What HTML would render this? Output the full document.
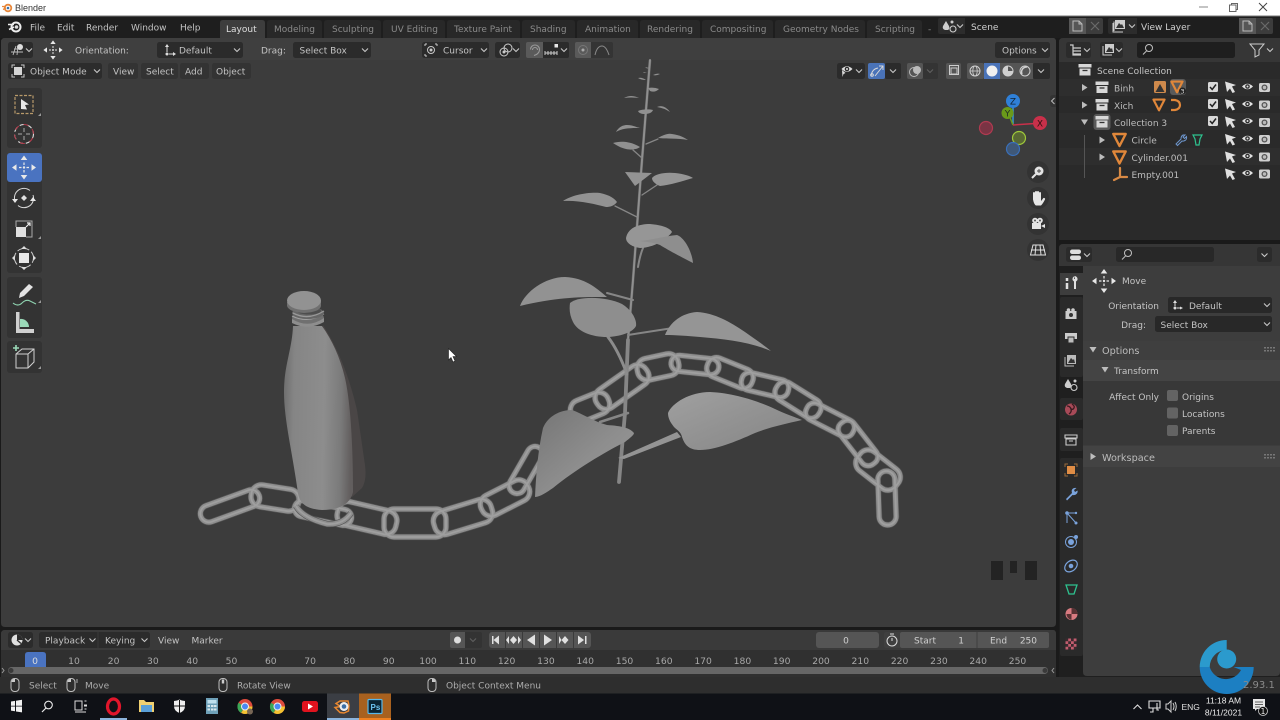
<!DOCTYPE html>
<html><head><meta charset="utf-8"><title>Blender</title>
<style>
html,body{margin:0;padding:0;background:#3c3c3c;width:1280px;height:720px;overflow:hidden}
svg{display:block}
text{font-family:"DejaVu Sans","Liberation Sans",sans-serif;font-size:9px;fill:#c4c4c4}
.d{fill:#8a8a8a}
.m{fill:#adadad}
.s{font-size:9.2px;fill:#a8a8a8}
.r{text-anchor:end}
.c{text-anchor:middle}
.lf{fill:#909090}
.st{fill:none;stroke:#868686;stroke-linecap:round}
</style></head><body>
<svg width="1280" height="720" viewBox="0 0 1280 720" xmlns="http://www.w3.org/2000/svg">
<defs>
<linearGradient id="bot" x1="0" x2="1" y1="0" y2="0.05"><stop offset="0" stop-color="#6c6c6c"/><stop offset=".16" stop-color="#858585"/><stop offset=".6" stop-color="#8d8d8d"/><stop offset=".85" stop-color="#7a7a7a"/><stop offset="1" stop-color="#625e5e"/></linearGradient>
<linearGradient id="lfA" x1="0" x2="1" y1="0" y2="1"><stop offset="0" stop-color="#757575"/><stop offset=".55" stop-color="#8e8e8e"/><stop offset="1" stop-color="#9a9a9a"/></linearGradient>
<linearGradient id="lfB" x1="0" x2="1" y1="0" y2="1"><stop offset="0" stop-color="#a0a0a0"/><stop offset=".5" stop-color="#929292"/><stop offset="1" stop-color="#858585"/></linearGradient>
<g id="chain" fill="none">
<rect x="-31" y="-8.5" width="62" height="17" rx="8.5" transform="translate(230,506) rotate(-20)"/>
<rect x="-24" y="-11" width="48" height="22" rx="10" transform="translate(275,498) rotate(9)"/>
<rect x="-29" y="-8" width="58" height="16" rx="8" transform="translate(323,513) rotate(12)"/>
<rect x="-30" y="-12" width="60" height="24" rx="10" transform="translate(367,518) rotate(13)"/>
<rect x="-31" y="-14" width="62" height="28" rx="10" transform="translate(415,523)"/>
<rect x="-30" y="-12" width="60" height="24" rx="10" transform="translate(463,517) rotate(-17)"/>
<rect x="-26" y="-11" width="52" height="22" rx="10" transform="translate(505,498) rotate(-27)"/>
<rect x="-26" y="-8" width="52" height="16" rx="8" transform="translate(526,470) rotate(-60)"/>
<rect x="-20" y="-11" width="40" height="22" rx="10" transform="translate(590,407) rotate(-22)"/>
<rect x="-30" y="-11" width="60" height="22" rx="10" transform="translate(622,387) rotate(-35)"/>
<rect x="-21" y="-11" width="42" height="22" rx="10" transform="translate(658,367) rotate(-12)"/>
<rect x="-24" y="-8" width="48" height="16" rx="8" transform="translate(695,365) rotate(6)"/>
<rect x="-24" y="-10" width="48" height="20" rx="9" transform="translate(730,373) rotate(22)"/>
<rect x="-24" y="-9" width="48" height="18" rx="8" transform="translate(765,385) rotate(13)"/>
<rect x="-25" y="-10" width="50" height="20" rx="9" transform="translate(798,400) rotate(32)"/>
<rect x="-26" y="-9" width="52" height="18" rx="8" transform="translate(830,420) rotate(27)"/>
<rect x="-26" y="-9" width="52" height="18" rx="8" transform="translate(858,443) rotate(52)"/>
<rect x="-24" y="-12" width="48" height="24" rx="10" transform="translate(878,470) rotate(38)"/>
<rect x="-27" y="-8.5" width="54" height="17" rx="8.5" transform="translate(887,498) rotate(88)"/>
</g>
<g id="mv" fill="none" stroke="#e8e8e8">
<path d="M0-5V-2.5M0 2.5V5M-5 0H-2.5M2.5 0H5" stroke-width="1.2"/>
<path d="M0-12l-3.3 4.5h6.6zM0 12l-3.3-4.5h6.6zM-12 0l4.5-3.3v6.6zM12 0l-4.500-3.300v6.600z" fill="#e8e8e8" stroke="none"/>
<circle r="1.200" fill="#e8e8e8" stroke="none"/>
</g>
<path id="chev" d="M-3-1.500L0 1.500 3-1.500" fill="none" stroke="#c8c8c8" stroke-width="1.100"/>
<g id="eye"><path d="M-5.500 0Q0-5.500 5.500 0Q0 5.500-5.500 0Z" fill="#e0e0e0"/><circle r="2.300" fill="#2b2b2b"/><circle r="1" fill="#e0e0e0"/></g>
<g id="cam"><rect x="-5.500" y="-4" width="11" height="9" rx="1.500" fill="#cfcfcf"/><circle cy=".5" r="3" fill="#555"/><circle cy=".5" r="1.700" fill="#bbb"/></g>
<path id="arr" d="M-5-5.500L6-2 2-.5 5 5 2.500 6 0 1.500-3 5Z" fill="#e0e0e0"/>
<g id="cb"><rect x="-5" y="-5" width="10" height="10" rx="1.500" fill="#d8d8d8"/><path d="M-3 0L-.800 2.500 3-2.500" fill="none" stroke="#222" stroke-width="1.500"/></g>
<g id="col"><path d="M-6.500-6h13v3.500h-13z" fill="#d8d8d8"/><path d="M-5.500-1.500h11v7h-11z" fill="#d8d8d8"/><path d="M-2.500 .5h5" stroke="#333" stroke-width="1.300"/></g>
<path id="tri" d="M-6.200-5.500H6.200L0 6.500Z" fill="none" stroke="#e0873a" stroke-width="2.400" stroke-linejoin="round"/>
<g id="mouse" fill="none" stroke="#bdbdbd" stroke-width="1"><rect x="-4" y="-6.500" width="8" height="13" rx="3.500"/></g>
<path id="grip" d="M0 0h2v1.500h-2zM3 0h2v1.500h-2zM6 0h2v1.500h-2zM9 0h2v1.500h-2zM0 3h2v1.500h-2zM3 3h2v1.500h-2zM6 3h2v1.500h-2zM9 3h2v1.500h-2z" fill="#777"/>
<path id="rt" d="M-2.500-3.500L3 0-2.500 3.500Z" fill="#bdbdbd"/>
<path id="dt" d="M-3.500-2.500L0 3 3.500-2.500Z" fill="#bdbdbd"/>
</defs>

<!-- base -->
<rect width="1280" height="720" fill="#1a1a1a"/>
<rect width="1280" height="15.500" fill="#fff"/>
<rect y="15.500" width="1280" height="1" fill="#777"/>
<g transform="translate(8,8)"><circle r="3.300" fill="none" stroke="#e8873a" stroke-width="1.800"/><circle r="1.300" fill="#3a6ea5"/><path d="M-6-1.500H-2M-5 1.500L-2 0" stroke="#e8873a" stroke-width="1.300"/></g>
<text x="15" y="11" style="font:9px 'Liberation Sans',sans-serif;fill:#333">Blender</text>
<path d="M1199 7h9" stroke="#888" stroke-width="1"/>
<path d="M1229.500 5h6.500v6.500h-6.500zM1231.500 5V3.500h6v6H1236" fill="none" stroke="#666" stroke-width="1"/>
<path d="M1259 3l8 8M1267 3l-8 8" stroke="#444" stroke-width="1"/>

<!-- top bar -->
<rect y="16.500" width="1280" height="21.500" fill="#1e1e1e"/>
<g transform="translate(15,27)"><circle cx="1" r="4.500" fill="none" stroke="#eee" stroke-width="2"/><circle cx="1.500" r="1.800" fill="#ddd"/><path d="M-7-2.500H-1M-6 2.500L-1 0" stroke="#eee" stroke-width="1.600"/></g>
<text x="30" y="30.500">File</text><text x="57" y="30.500">Edit</text><text x="86" y="30.500">Render</text><text x="131" y="30.500">Window</text><text x="180" y="30.500">Help</text>
<path d="M220 38V23q0-3 3-3h39q3 0 3 3v15z" fill="#3d3d3d"/>
<g fill="#282828">
<path d="M267 38V23q0-3 3-3h49q3 0 3 3v15z"/><path d="M324 38V23q0-3 3-3h51q3 0 3 3v15z"/><path d="M383 38V23q0-3 3-3h56q3 0 3 3v15z"/><path d="M447 38V23q0-3 3-3h67q3 0 3 3v15z"/><path d="M522 38V23q0-3 3-3h47q3 0 3 3v15z"/><path d="M577 38V23q0-3 3-3h55q3 0 3 3v15z"/><path d="M640 38V23q0-3 3-3h54q3 0 3 3v15z"/><path d="M702 38V23q0-3 3-3h65q3 0 3 3v15z"/><path d="M775 38V23q0-3 3-3h84q3 0 3 3v15z"/><path d="M867 38V23q0-3 3-3h49q3 0 3 3v15z"/>
</g>
<text x="226" y="32" style="fill:#dedede">Layout</text>
<text class="d" x="274" y="32">Modeling</text><text class="d" x="332" y="32">Sculpting</text><text class="d" x="391" y="32">UV Editing</text><text class="d" x="454" y="32">Texture Paint</text><text class="d" x="530" y="32">Shading</text><text class="d" x="585" y="32">Animation</text><text class="d" x="647" y="32">Rendering</text><text class="d" x="710" y="32">Compositing</text><text class="d" x="783" y="32">Geometry Nodes</text><text class="d" x="875" y="32">Scripting</text><text class="d" x="928" y="32">-</text>
<!-- scene -->
<path d="M938 20q0-2 2-2h25v16h-25q-2 0-2-2z" fill="#2c2c2c"/>
<g transform="translate(949,26)"><path d="M-4 4q-3-1-2-4L-3-5 0 0q1 3-1 4z" fill="#ccc"/><circle cx="4" cy="3" r="3" fill="none" stroke="#ccc" stroke-width="1.100"/><circle cx="3" cy="-4" r="1.500" fill="#ccc"/></g>
<use href="#chev" x="960" y="26"/>
<rect x="965" y="18" width="104" height="16" fill="#1e1e1e"/>
<text x="971" y="30" style="fill:#d0d0d0">Scene</text>
<rect x="1069" y="18" width="17" height="16" fill="#565656"/>
<path d="M1073 21h6l3 3v7h-9zM1079 21v3h3" fill="none" stroke="#bbb" stroke-width="1"/>
<path d="M1086 18h15q2 0 2 2v12q0 2-2 2h-15z" fill="#3c3c3c"/>
<path d="M1091 22l8 8M1099 22l-8 8" stroke="#6a6a6a" stroke-width="1.200"/>
<path d="M1108 20q0-2 2-2h27v16h-27q-2 0-2-2z" fill="#2c2c2c"/>
<g transform="translate(1120,26)"><rect x="-5" y="-6" width="10" height="9" fill="#ccc"/><path d="M-4 2L-1-3 1-1 2-2 4 2z" fill="#333"/><path d="M-7-3v9h10M-6-4.500v9.500" fill="none" stroke="#ccc" stroke-width="1"/></g>
<use href="#chev" x="1132" y="26"/>
<rect x="1137" y="18" width="102" height="16" fill="#1e1e1e"/>
<text x="1141" y="30" style="fill:#d0d0d0">View Layer</text>
<rect x="1239" y="18" width="17" height="16" fill="#565656"/>
<path d="M1243 21h6l3 3v7h-9zM1249 21v3h3" fill="none" stroke="#bbb" stroke-width="1"/>
<path d="M1256 18h15q2 0 2 2v12q0 2-2 2h-15z" fill="#3c3c3c"/>
<path d="M1261 22l8 8M1269 22l-8 8" stroke="#6a6a6a" stroke-width="1.200"/>

<!-- viewport -->
<path d="M1 42q0-4 4-4h1048q3 0 3 4v581q0 4-4 4H5q-4 0-4-4z" fill="#3c3c3c"/>
<path d="M1 60V42q0-4 4-4h1048q3 0 3 4v18z" fill="#3f3f3f"/>

<!-- tool header -->
<rect x="8" y="42" width="25" height="16" rx="2.500" fill="#2b2b2b"/>
<g transform="translate(19,49)"><path d="M-6 6L-3-3M-8 3H4M-5 0H3M-1-3l-1 9" stroke="#bbb" stroke-width=".9" fill="none"/><circle cx="1" cy="-2" r="3" fill="#ddd"/></g>
<use href="#chev" x="29" y="50"/>
<use href="#mv" transform="translate(53,50) scale(.8)"/>
<text x="75" y="53.500">Orientation:</text>
<rect x="157" y="42" width="86" height="16" rx="2.500" fill="#2b2b2b"/>
<g transform="translate(168,50)"><circle cy="4" cx="-1" r="1.500" fill="#ddd"/><path d="M-1 2V-3M1 4h4" stroke="#ddd" stroke-width="1"/><path d="M-1-6l-2 3h4zM8 4L5 2v4z" fill="#ddd"/></g>
<text x="179" y="53.500">Default</text>
<use href="#chev" x="237" y="50"/>
<text x="261" y="53.500">Drag:</text>
<rect x="293" y="42" width="78" height="16" rx="2.500" fill="#2b2b2b"/>
<text x="299.500" y="53.500">Select Box</text>
<use href="#chev" x="365" y="50"/>
<rect x="422" y="42" width="67" height="16" rx="2.500" fill="#2b2b2b"/>
<g transform="translate(431,50)" fill="none" stroke="#c8c8c8" stroke-width="1"><circle r="3.500"/><path d="M-6-6h2M-6-6v2M-6 6h2M-6 6V4M6-6H4M6-6v2"/><circle r="1" fill="#c8c8c8"/></g>
<text x="443" y="53.500">Cursor</text>
<use href="#chev" x="484" y="50"/>
<rect x="495" y="42" width="25" height="16" rx="2.500" fill="#2b2b2b"/>
<g transform="translate(505,50)" fill="none" stroke="#ccc" stroke-width="1"><circle cx="-1" cy="2" r="4"/><circle cx="3" cy="-2" r="4"/><circle cx="-1" cy="2" r="1" fill="#ccc"/></g>
<use href="#chev" x="516" y="50"/>
<path d="M526 44q0-2 2-2h15v16h-15q-2 0-2-2z" fill="#5a5a5a"/>
<path d="M530.500 49.500a4.500 4.500 0 0 1 9 0q0 3-3 5l-2.500 1M532.500 50a2.500 2.500 0 0 1 5 0" fill="none" stroke="#9a9a9a" stroke-width="1.100"/>
<path d="M543 42h24q2 0 2 2v12q0 2-2 2h-24z" fill="#2b2b2b"/>
<g stroke="#ccc" stroke-width="1" fill="none"><path d="M545 51v4M548 51v4M551 51v4M554 51v4M545 53h12M557 51v4"/></g>
<rect x="554.500" y="44" width="3.500" height="3.500" fill="#e8e8e8"/>
<use href="#chev" x="564" y="50"/>
<path d="M575 44q0-2 2-2h14v16h-14q-2 0-2-2z" fill="#5a5a5a"/>
<circle cx="583" cy="50" r="4.500" fill="none" stroke="#777" stroke-width="1"/><circle cx="583" cy="50" r="1.500" fill="#aaa"/>
<path d="M591 42h20q2 0 2 2v12q0 2-2 2h-20z" fill="#343434"/>
<path d="M595 55q2-9 7-9q4 0 7 9" fill="none" stroke="#8a8a8a" stroke-width="1"/>
<rect x="995" y="42" width="55" height="16" rx="2.500" fill="#2b2b2b"/>
<text x="1002" y="53.500">Options</text>
<use href="#chev" x="1045" y="50"/>

<!-- 3d view header -->
<rect x="8" y="63" width="94" height="16" rx="2.500" fill="#2c2c2c"/>
<g transform="translate(18,71)" fill="none" stroke="#c8c8c8" stroke-width="1"><path d="M-6-3v-3h3M3-6h3v3M6 3v3h-3M-3 6h-3v-3"/><rect x="-4" y="-4" width="8" height="8" fill="#d5d5d5" stroke="none"/></g>
<text x="30" y="74.500">Object Mode</text>
<use href="#chev" x="97" y="71"/>
<rect x="108" y="63" width="30" height="16" rx="2.500" fill="#333"/><text x="113" y="74.500">View</text>
<rect x="141" y="63" width="37" height="16" rx="2.500" fill="#333"/><text x="146" y="74.500">Select</text>
<rect x="180" y="63" width="29" height="16" rx="2.500" fill="#333"/><text x="185" y="74.500">Add</text>
<rect x="212" y="63" width="39" height="16" rx="2.500" fill="#333"/><text x="216" y="74.500">Object</text>

<rect x="837" y="63" width="28" height="16" rx="2.500" fill="#2b2b2b"/>
<g transform="translate(846,71)"><use href="#eye" x="1" y="-2"/><path d="M-4-1L-.5 2-2.500 3-3.500 6Z" fill="#ddd"/></g>
<use href="#chev" x="859" y="71"/>
<rect x="868" y="63" width="17" height="16" rx="2" fill="#4a73b8"/>
<path d="M871 76q1-7 7-8M875 76l8-10M879 66h4v4" fill="none" stroke="#d8d8d8" stroke-width="1"/><circle cx="872" cy="75" r="1.300" fill="none" stroke="#ddd"/>
<rect x="885" y="63" width="16" height="16" rx="2" fill="#2b2b2b"/><use href="#chev" x="893" y="71"/>
<rect x="907" y="63" width="16" height="16" rx="2" fill="#555"/>
<circle cx="914" cy="72" r="4.500" fill="none" stroke="#bbb" stroke-width="1"/><circle cx="917" cy="70" r="4" fill="#bbb"/>
<rect x="923" y="63" width="15" height="16" rx="2" fill="#343434"/><use href="#chev" x="930" y="71" opacity=".3"/>
<rect x="946" y="63" width="15" height="16" rx="2" fill="#555"/>
<path d="M949.500 65.500h9v9h-9zM951 68h6v6h-6z" fill="none" stroke="#ccc" stroke-width="1"/>
<rect x="967" y="63" width="17" height="16" rx="2" fill="#555"/>
<circle cx="975" cy="71" r="5" fill="none" stroke="#d0d0d0"/><ellipse cx="975" cy="71" rx="2.200" ry="5" fill="none" stroke="#d0d0d0" stroke-width=".8"/><path d="M970 71h10" stroke="#d0d0d0" stroke-width=".8"/>
<rect x="984" y="63" width="16" height="16" fill="#4a73b8"/><circle cx="992" cy="71" r="5.500" fill="#f0f0f0"/>
<rect x="1000" y="63" width="17" height="16" fill="#555"/><circle cx="1008" cy="71" r="5" fill="none" stroke="#d0d0d0"/><path d="M1008 66a5 5 0 0 0-5 5a5 5 0 0 0 5 5a5 5 0 0 0 5-5h-5z" fill="#d0d0d0"/>
<rect x="1017" y="63" width="16" height="16" fill="#555"/><circle cx="1025" cy="71" r="5" fill="none" stroke="#d0d0d0"/><path d="M1022 74a5 5 0 0 1 5-7" fill="none" stroke="#d0d0d0" stroke-width="1.500"/>
<rect x="1033" y="63" width="17" height="16" rx="2" fill="#2b2b2b"/><use href="#chev" x="1041" y="71"/>

<!-- toolbar -->
<rect x="7" y="88" width="35" height="60" rx="3" fill="#333"/>
<rect x="7" y="153" width="35" height="120" rx="3" fill="#333"/>
<rect x="7" y="277" width="35" height="61" rx="3" fill="#333"/>
<rect x="7" y="341" width="35" height="32" rx="3" fill="#333"/>
<g fill="#999"><path d="M41 116v-3l-3 3zM41 239v-3l-3 3zM41 303v-3l-3 3zM41 369v-3l-3 3z"/></g>
<rect x="15" y="95.500" width="18" height="18" fill="none" stroke="#b89a6a" stroke-width="1.200" stroke-dasharray="3 1.500"/>
<path d="M21 99L29 104.500 25 105 27 109.500 21 109Z" fill="#e8e8e8"/>
<circle cx="24" cy="134" r="9.500" fill="none" stroke="#e0e0e0" stroke-width="1.100" stroke-dasharray="5 3"/>
<circle cx="24" cy="134" r="9.500" fill="none" stroke="#b03a4a" stroke-width="1.100" stroke-dasharray="5 5" stroke-dashoffset="6"/>
<path d="M24 128v4M24 136v4M18 134h4M26 134h4" stroke="#aaa" stroke-width="1"/>
<rect x="7" y="153" width="35" height="29" rx="3" fill="#4a73c0"/>
<use href="#mv" transform="translate(24,167.500)"/>
<g transform="translate(24,198)"><path d="M-9 3A9.500 9.500 0 0 1 6-7.500M9-3A9.500 9.500 0 0 1-6 7.500" fill="none" stroke="#d8d8d8" stroke-width="1"/><path d="M-3 0L0-3 3 0 0 3Z" fill="#e0e0e0"/><path d="M-9 5l-3-4h6zM9-1l3 4h-6z" fill="#e8e8e8"/></g>
<g transform="translate(24,229)"><rect x="-8" y="-2" width="10" height="10" fill="#e0e0e0"/><path d="M-8-2V-8H8V8H2" fill="none" stroke="#aaa" stroke-width="1"/><path d="M2-2L6-6M3-6h3v3" fill="none" stroke="#eee" stroke-width="1.200"/></g>
<g transform="translate(24,258)"><rect x="-5" y="-5" width="10" height="10" fill="#e8e8e8"/><circle r="9.500" fill="none" stroke="#ccc" stroke-width="1" stroke-dasharray="5 2.500"/><path d="M0-12l-3 3h6zM0 12l-3-3h6zM-12 0l3-3v6zM12 0l-3-3v6z" fill="#ddd"/></g>
<g transform="translate(24,293)"><path d="M5-9l4 3-9 9-5 2 1-5z" fill="#e4e4e4"/><path d="M-11 10q5 4 9 0t8-2t6 3" fill="none" stroke="#8fd3b0" stroke-width="1.100"/></g>
<g transform="translate(24,323)"><path d="M-8-11h3.500V6h-3.500zM-8 6H10V10H-8z" fill="#d0d0d0"/><path d="M-4 4V-4a8 8 0 0 1 9 8z" fill="#9ad9b8"/></g>
<g transform="translate(24,357)"><path d="M-8-3L-2-8H10V5L4 11H-8ZM-8-3H4V11M4-3L10-8" fill="none" stroke="#d0d0d0" stroke-width="1"/><path d="M-11-9h6M-8-12v6" stroke="#9ad9b8" stroke-width="1.600"/></g>

<!-- gizmo -->
<g>
<circle cx="986" cy="128" r="6.500" fill="#7a3444" stroke="#b03a50" stroke-width="1.200"/>
<circle cx="1019" cy="138" r="6.500" fill="#596834" stroke="#9ec83a" stroke-width="1.200"/>
<circle cx="1013" cy="149" r="6.500" fill="#3f5878" stroke="#3a6fb8" stroke-width="1.200"/>
<path d="M1013 125V105" stroke="#3a9ad0" stroke-width="1.500"/>
<path d="M1013 125L1009 115" stroke="#6a9a1a" stroke-width="1.500"/>
<path d="M1013 125L1035 123.500" stroke="#c9304a" stroke-width="1.500"/>
<circle cx="1013" cy="101" r="7" fill="#2f80d8"/><text class="c" x="1013" y="104.500" style="fill:#123;font-size:9px">Z</text>
<circle cx="1007.500" cy="113" r="6" fill="#6a9a1a"/><text class="c" x="1007.500" y="116.500" style="fill:#232;font-size:9px">Y</text>
<circle cx="1040" cy="123" r="7" fill="#c9304a"/><text class="c" x="1040" y="126.500" style="fill:#311;font-size:9px">X</text>
</g>
<path d="M1056 95h-3q-3 0-3 3v6q0 3 3 3h3z" fill="#333"/><path d="M1054.500 98L1051.500 101 1054.500 104" fill="none" stroke="#bbb"/>
<g fill="#333"><circle cx="1038" cy="172" r="11"/><circle cx="1038" cy="198" r="11"/><circle cx="1038" cy="224" r="11"/><circle cx="1038" cy="250" r="11"/></g>
<g transform="translate(1038,172)"><circle cx="1" cy="-1" r="4.500" fill="#e4e4e4"/><path d="M-2 2L-6 6" stroke="#e4e4e4" stroke-width="2"/><path d="M-1-1h4M1-3v4" stroke="#444" stroke-width=".9"/></g>
<path d="M1033 199v-6a1 1 0 0 1 2 0v-1a1 1 0 0 1 2 0a1 1 0 0 1 2 0v1a1 1 0 0 1 2 0v8q1-1 2-2.500a1 1 0 0 1 2 1q-2 4-4 6h-5q-2-1-3-6z" fill="#e6e6e6"/>
<g transform="translate(1038,224)"><rect x="-6" y="-1" width="9" height="6" fill="#e4e4e4"/><circle cx="-3" cy="-3.500" r="2.800" fill="#e4e4e4"/><circle cx="2" cy="-3.500" r="2.800" fill="#e4e4e4"/><circle cx="-3" cy="-3.500" r="1" fill="#555"/><circle cx="2" cy="-3.500" r="1" fill="#555"/><path d="M3 2l4-2v4z" fill="#e4e4e4"/></g>
<path d="M1033 245h10l2.500 10h-15zM1031 250h14M1036 245l-1 10M1040 245l1 10" fill="none" stroke="#e0e0e0" stroke-width="1"/>

<!-- dark hud -->
<g fill="#232323"><rect x="991" y="561" width="12" height="19"/><rect x="1010" y="561" width="7" height="12"/><rect x="1025" y="561" width="12" height="19"/></g>

<!-- chain -->
<use href="#chain" stroke="#555" stroke-width="6.200"/>
<use href="#chain" stroke="#8e8e8e" stroke-width="4.900"/>
<use href="#chain" stroke="#9f9f9f" stroke-width="1.800"/>

<!-- bottle -->
<path d="M323 325C340 352 350 380 357 410L365 465Q367 480 362 488L352 497 335 470Z" fill="#4a4646"/>
<path d="M293 326C292 350 284 365 284 392C284 420 292 450 298 493C300 505 308 509 322 510C338 510 350 505 353 492C353 440 350 400 345 378C340 357 332 340 322 326Z" fill="url(#bot)"/>
<ellipse cx="308" cy="318" rx="16" ry="8" fill="#707070"/>
<path d="M292 319q16 10 32-1v4q-16 9-32 1z" fill="#8e8e8e"/>
<path d="M292 316q16 8 32-2" fill="none" stroke="#a0a0a0" stroke-width="1"/>
<ellipse cx="308" cy="313" rx="16" ry="6" fill="#666"/>
<ellipse cx="309" cy="311" rx="12" ry="3.500" fill="#4e4e4e"/>
<path d="M293 313q15 8 31-2" fill="none" stroke="#999" stroke-width="1.300"/>
<path d="M287 302v4q2 6 17 7 16-1 17-7v-5z" fill="#707070"/>
<ellipse cx="304" cy="300.500" rx="17" ry="9.500" fill="#929292"/>
<!-- front of chain over the bottle base -->
<path id="fr" d="M296 506Q303 518 327 524Q343 525 351 513" fill="none" stroke="#555" stroke-width="6.200"/>
<path d="M296 506Q303 518 327 524Q343 525 351 513" fill="none" stroke="#8e8e8e" stroke-width="4.900"/>
<path d="M296 506Q303 518 327 524Q343 525 351 513" fill="none" stroke="#9f9f9f" stroke-width="1.800"/>

<!-- plant stem -->
<path d="M650 60L642 160 633 280 628 340 625 413 619 482" fill="none" stroke="#606060" stroke-width="2.800"/>
<path d="M650 60L642 160 633 280 628 340" class="st" stroke-width="1.900" style="stroke:#909090"/>
<path d="M628 340L625 413 619 482" class="st" stroke-width="3.800" style="stroke:#868686"/>
<!-- stems -->
<g class="st" stroke-width="1.300">
<path d="M607 293L633 300" stroke-width="2"/><path d="M608 337Q618 350 627 374" stroke-width="3" style="stroke:#8c8c8c"/><path d="M628 335L673 328" stroke-width="2"/>
<path d="M638 267Q640 255 643 248" stroke-width="2"/><path d="M615 206L637 217"/><path d="M642 195L657 185"/><path d="M633 150L642 158"/><path d="M646 144L658 139"/><path d="M600 422L628 413" stroke-width="2.500"/>
</g>
<!-- leaves -->
<path d="M520 306C525 292 545 277 565 277C585 278 595 287 607 297C590 297 560 296 520 306Z" fill="#929292"/>
<path d="M570 303C578 296 605 296 622 304C632 310 637 320 636 326C632 334 615 337 607 337C592 337 578 332 573 322C570 316 569 310 570 303Z" fill="#8e8e8e"/>
<path d="M665 335C670 322 682 313 697 312C715 313 730 322 745 332C755 339 765 346 771 351C750 342 725 339 700 337C688 336 675 335 665 335Z" fill="#959595"/>
<path d="M626 238C628 228 638 224 650 224C662 225 670 228 672 232C665 242 650 248 640 248C632 247 626 243 626 238Z" fill="#969696"/>
<path d="M640 241C652 240 665 236 677 235C685 238 692 252 693 263C683 258 668 250 660 245C652 242 645 242 640 241Z" fill="#8e8e8e"/>
<path d="M563 201C572 195 588 192 600 193C610 195 615 199 617 202C614 206 610 207 606 207C595 204 578 200 563 201Z" fill="#929292"/>
<path d="M625 172L652 173 635 186Z" fill="#939393"/>
<path d="M652 178C655 174 665 172 675 173C684 174 690 176 693 178C683 181 670 185 660 186C655 184 652 181 652 178Z" fill="#959595"/>
<path class="lf" d="M613 143C620 141 630 141 640 147C636 150 630 150 626 149C621 148 616 145 613 143Z"/>
<path class="lf" d="M658 138C663 135 668 133 672 134C680 135 685 138 688 140C678 138 666 139 658 138Z"/>
<path class="lf" d="M616 132C618 128 622 125 627 125C632 125 636 127 640 128C632 128 622 128 616 132Z"/>
<path class="lf" d="M638 111C642 109 650 109 653 110C652 113 648 114 645 114C641 114 639 113 638 111Z"/>
<path class="lf" d="M657 107Q664 104 670 112Q664 108 657 107Z"/>
<path class="lf" d="M624 98Q631 94 639 98Q631 97 624 98Z"/>
<path class="lf" d="M648 88Q654 87 659 89Q655 93 650 91Z"/>
<path class="lf" d="M638 78Q642 77 646 80Q641 80 638 78ZM653 75Q657 73 660 74Q656 76 653 75ZM643 72l4 1-3 0zM645 67l4 1-2 .5z"/>
<!-- big lower leaves -->
<path d="M572 410C560 410 548 416 543 428C538 450 536 475 535 497C540 497 547 492 553 488C575 470 605 452 625 442C630 438 634 435 634 433C630 428 622 426 607 425C595 422 583 414 572 410Z" fill="url(#lfA)"/>
<path d="M618 458L677 432 681 437 624 459Z" fill="#949494"/>
<path d="M668 413C672 403 690 392 710 392C735 393 760 402 775 409C785 414 795 417 802 420C785 424 770 427 755 433C735 442 715 450 700 450C690 450 685 446 682 437C681 432 677 430 674 427C670 422 668 418 668 413Z" fill="url(#lfB)"/>

<!-- cursor -->
<path d="M448.500 348.500V360L451 357.500 453 362 455 361 453 356.500H456.500Z" fill="#fff" stroke="#222" stroke-width=".6"/>

<!-- outliner -->
<path d="M1059 42q0-4 4-4h217v202h-221z" fill="#2a2a2a"/>
<path d="M1059 42q0-4 4-4h217v24h-221z" fill="#363636"/>
<rect x="1066" y="42" width="25" height="16" rx="2.500" fill="#2b2b2b"/>
<path d="M1070 45h3v10h8M1073 48h8M1073 51h8M1073 54h8" fill="none" stroke="#ccc" stroke-width="1.200"/>
<use href="#chev" x="1087" y="50"/>
<rect x="1100" y="42" width="23" height="16" rx="2.500" fill="#2b2b2b"/>
<g transform="translate(1109,49)"><rect x="-4" y="-5" width="9" height="9" fill="#ccc"/><path d="M-3 3L0-2 2 0 3-1 4 3z" fill="#333"/><path d="M-6-3v9h9" fill="none" stroke="#ccc" stroke-width="1"/></g>
<use href="#chev" x="1119" y="50"/>
<rect x="1137" y="42" width="98" height="16" rx="2.500" fill="#1e1e1e"/>
<circle cx="1149" cy="48" r="3.500" fill="none" stroke="#c0c0c0" stroke-width="1"/><path d="M1146.500 51L1143 54.500" stroke="#c0c0c0"/>
<path d="M1250 44h14l-5 6v5l-4 2v-7z" fill="none" stroke="#ccc" stroke-width="1"/><use href="#chev" x="1270" y="50"/>

<rect x="1059" y="79" width="221" height="17" fill="#2e2e2e"/>
<rect x="1059" y="113" width="221" height="17" fill="#2e2e2e"/>
<rect x="1059" y="148" width="221" height="17" fill="#2e2e2e"/>
<path d="M1084.500 135v43" stroke="#555" stroke-width="1"/>
<use href="#col" x="1085" y="70"/>
<text x="1097" y="74">Scene Collection</text>
<use href="#rt" x="1084.500" y="87.500"/><use href="#col" x="1102" y="87.500"/><text x="1114" y="91.500" style="fill:#bdbdbd">Binh</text>
<use href="#rt" x="1084.500" y="105"/><use href="#col" x="1102" y="105"/><text x="1114" y="109" style="fill:#bdbdbd">Xich</text>
<use href="#dt" x="1084.500" y="122"/><rect x="1093.500" y="114" width="17" height="16" rx="3" fill="#5a5a5a"/><use href="#col" x="1102" y="122"/><text x="1114" y="126" style="fill:#bdbdbd">Collection 3</text>
<use href="#rt" x="1102" y="140"/><use href="#tri" x="1119.500" y="139.500"/><text x="1131.500" y="143.500" style="fill:#bdbdbd">Circle</text>
<use href="#rt" x="1102" y="157"/><use href="#tri" x="1119.500" y="157"/><text x="1131.500" y="161" style="fill:#bdbdbd">Cylinder.001</text>
<path d="M1120 168v9m0 0h7m-7 0l-6 3" fill="none" stroke="#d98a45" stroke-width="2.200" stroke-linecap="round"/><text x="1131.500" y="178" style="fill:#bdbdbd">Empty.001</text>
<!-- binh extras -->
<rect x="1154" y="81" width="12" height="12" rx="1.500" fill="#cf8a4c"/><path d="M1155.500 92L1160 84 1164.500 92Z" fill="#333"/>
<rect x="1170" y="79" width="16" height="16" rx="3" fill="#5a5a5a"/><use href="#tri" transform="translate(1177,86.500) scale(.9)"/>
<circle cx="1182.500" cy="91" r="3.500" fill="#222"/><text class="c" x="1182.500" y="93.500" style="font-size:6.500px;fill:#ddd">3</text>
<use href="#tri" transform="translate(1159,104.500) scale(.9)"/>
<path d="M1171 100h4q5 1 5 5t-5 5h-4" fill="none" stroke="#e0873a" stroke-width="2.200"/>
<path d="M1176 144l5-5q0-3 2-4l2 0-2 2 1.500 1.500 2-2q.5 3-1.500 4-2 1-3 .5l-4.500 4.500z" fill="none" stroke="#6d95cc" stroke-width="1"/>
<path d="M1193 135h9l-2 4-1 6h-3l-1-6z" fill="none" stroke="#2ec28f" stroke-width="1.200"/>
<g>
<use href="#cb" x="1213" y="87"/><use href="#cb" x="1213" y="104"/><use href="#cb" x="1213" y="121"/>
<use href="#arr" x="1230" y="87"/><use href="#arr" x="1230" y="104.500"/><use href="#arr" x="1230" y="122"/><use href="#arr" x="1230" y="139.500"/><use href="#arr" x="1230" y="157"/><use href="#arr" x="1230" y="174"/>
<use href="#eye" x="1247.500" y="86.500"/><use href="#eye" x="1247.500" y="104"/><use href="#eye" x="1247.500" y="121"/><use href="#eye" x="1247.500" y="138.500"/><use href="#eye" x="1247.500" y="156"/><use href="#eye" x="1247.500" y="173"/>
<use href="#cam" x="1264.500" y="87"/><use href="#cam" x="1264.500" y="104.500"/><use href="#cam" x="1264.500" y="122"/><use href="#cam" x="1264.500" y="139"/><use href="#cam" x="1264.500" y="156.500"/><use href="#cam" x="1264.500" y="173.500"/>
</g>

<!-- properties -->
<path d="M1059 248q0-4 4-4h217v433h-221z" fill="#1f1f1f"/>
<path d="M1059 248q0-4 4-4h217v22h-221z" fill="#363636"/>
<rect x="1066" y="247" width="26" height="15" rx="2.500" fill="#2b2b2b"/>
<rect x="1070" y="249.500" width="11" height="4.500" rx="2.200" fill="#ddd"/><rect x="1070" y="255.500" width="11" height="4.500" rx="2.200" fill="#ddd"/>
<use href="#chev" x="1087" y="255"/>
<rect x="1116" y="247" width="98" height="15" rx="2.500" fill="#282828"/>
<circle cx="1128" cy="253" r="3.500" fill="none" stroke="#c0c0c0"/><path d="M1125.500 256L1122 259.500" stroke="#c0c0c0"/>
<rect x="1257" y="247" width="15" height="15" rx="2.500" fill="#2b2b2b"/><use href="#chev" x="1264.500" y="255"/>

<path d="M1083 266h197v406q0 4-4 4h-189q-4 0-4-4z" fill="#3d3d3d"/>
<!-- side tabs -->
<g fill="#2a2a2a"><rect x="1060" y="297" width="23" height="80" rx="2"/><rect x="1060" y="398" width="23" height="22" rx="2"/><rect x="1060" y="428" width="23" height="23" rx="2"/><rect x="1060" y="458" width="23" height="178" rx="2"/><rect x="1060" y="633" width="23" height="23" rx="2"/></g>
<path d="M1060 273h23v22h-23z" fill="#3d3d3d"/>
<g><path d="M1067 278v3M1067 283v6" stroke="#e0e0e0" stroke-width="2.500" fill="none"/><path d="M1075 276q-3 1-2.500 4l1.500 1.500v7.500h2v-7.500l1.500-1.500q.5-3-2.500-4v3h-1z" fill="#e0e0e0"/></g>
<g transform="translate(1071,314)"><rect x="-5.500" y="-3" width="11" height="8" fill="#ccc"/><circle cx="-2.500" cy="-4" r="1.800" fill="#ccc"/><circle cx="2" cy="-4" r="1.800" fill="#ccc"/><circle cy="1" r="2" fill="#333"/></g>
<g transform="translate(1071,337)"><path d="M-6-4h12v6h-12z" fill="#ccc"/><path d="M-3 0h6v6h-6z" fill="#bbb" stroke="#2d2d2d"/></g>
<g transform="translate(1071,361)"><rect x="-4" y="-6" width="9" height="9" fill="#bbb"/><path d="M-3 2L0-3 2-1 3-2 4 2z" fill="#333"/><path d="M-6-4v9h9" fill="none" stroke="#bbb"/></g>
<g transform="translate(1071,385)"><path d="M-4 3q-3-1-2-4L-3-6 0-1q1 3-1 4z" fill="#ccc"/><circle cx="3" cy="2.500" r="3" fill="none" stroke="#ccc" stroke-width="1.100"/><circle cx="4" cy="-4" r="1.500" fill="#ccc"/></g>
<circle cx="1071" cy="409.500" r="6" fill="#a84a58"/><path d="M1067 406q3 0 4 3t-2 5M1072 404q3 2 2 4t-3 1" fill="none" stroke="#381b20" stroke-width="1.300"/>
<g transform="translate(1071,440)"><path d="M-6-5h12v3h-12zM-5-1h10v6h-10z" fill="none" stroke="#ccc" stroke-width="1.100"/><path d="M-2 1h4" stroke="#ccc"/></g>
<g transform="translate(1071,470)"><rect x="-4" y="-4" width="8" height="8" fill="#e08d45"/><path d="M-6-3v-3h3M3-6h3v3M6 3v3h-3M-3 6h-3v-3" fill="none" stroke="#9a6a3a"/></g>
<path d="M1066 499l6-6q-1-3 1-4.500 2-1 3.500-.5l-2.500 2 1 2 2.500-1.500q.5 2-1 3.500-1.500 1.500-4 1l-5.500 5.500z" fill="#7aa3dc"/>
<g fill="none" stroke="#7aa3dc" stroke-width="1"><path d="M1067 513l9 10M1067 513h9M1067 513v10"/></g><g fill="#7aa3dc"><circle cx="1067" cy="513" r="1.800"/><circle cx="1076" cy="523" r="1.500"/><circle cx="1076" cy="513" r="1.200"/></g>
<circle cx="1071" cy="542" r="5.500" fill="none" stroke="#7aa3dc" stroke-width="1"/><circle cx="1071" cy="542" r="3" fill="#7aa3dc"/><circle cx="1076" cy="537" r="2" fill="#7aa3dc"/>
<g transform="translate(1071,566) rotate(-40)"><ellipse rx="7" ry="5" fill="none" stroke="#7aa3dc" stroke-width="1.200"/><circle r="2.300" fill="#7aa3dc"/></g>
<path d="M1066 585h11l-3 9h-5z" fill="none" stroke="#2ec28f" stroke-width="1.300"/>
<circle cx="1071.500" cy="614" r="6" fill="#d87a80"/><path d="M1071.500 608a6 6 0 0 1 6 6h-6zM1071.500 614h-5a6 6 0 0 0 5 6z" fill="#3a2020" opacity=".8"/>
<g transform="translate(1071,644)"><rect x="-5.500" y="-5.500" width="11" height="11" fill="#c25c6e"/><path d="M-5.500-5.500h2.700v2.700h-2.700zM0-5.500h2.700v2.700H0zM-2.800-2.800H0V0h-2.800zM2.800-2.800h2.700V0H2.800zM-5.500 0h2.700v2.700h-2.700zM0 0h2.700v2.700H0zM-2.800 2.700H0v2.800h-2.800zM2.800 2.700h2.700v2.800H2.800z" fill="#3a2a2e"/></g>

<use href="#mv" transform="translate(1104,281)"/>
<text x="1122" y="284">Move</text>
<text class="r" x="1159" y="309">Orientation</text>
<rect x="1168" y="297" width="104" height="16" rx="2.500" fill="#282828"/>
<g transform="translate(1176,305)"><circle cx="-1" cy="3" r="1.500" fill="#ddd"/><path d="M-1 1V-3M1 3h4" stroke="#ddd" stroke-width="1"/><path d="M-1-5l-2 3h4zM7 3L4 1.500v3z" fill="#ddd"/></g>
<text x="1189" y="309">Default</text><use href="#chev" x="1267" y="305"/>
<text class="r" x="1146" y="328">Drag:</text>
<rect x="1155" y="316" width="117" height="16" rx="2.500" fill="#282828"/>
<text x="1160.500" y="328">Select Box</text><use href="#chev" x="1267" y="324"/>

<rect x="1083" y="341" width="197" height="19" fill="#3f3f3f"/>
<rect x="1083" y="360" width="197" height="21" fill="#444"/>
<rect x="1083" y="381" width="197" height="64" fill="#383838"/>
<use href="#dt" x="1093" y="349.500"/><text x="1102" y="354" style="font-size:9.700px;fill:#bcbcbc">Options</text>
<use href="#grip" x="1264" y="347"/>
<use href="#dt" x="1105" y="369.500"/><text x="1114" y="374">Transform</text>
<text class="r" x="1159" y="400">Affect Only</text>
<rect x="1167" y="390" width="11" height="11" rx="2" fill="#636363"/><text x="1182" y="400">Origins</text>
<rect x="1167" y="407.500" width="11" height="11" rx="2" fill="#636363"/><text x="1182" y="417">Locations</text>
<rect x="1167" y="425" width="11" height="11" rx="2" fill="#636363"/><text x="1182" y="434">Parents</text>
<rect x="1083" y="446" width="197" height="21" fill="#434343"/>
<use href="#rt" x="1093" y="456.500"/><text x="1102" y="461" style="font-size:9.700px;fill:#bcbcbc">Workspace</text>
<use href="#grip" x="1264" y="454"/>

<!-- timeline -->
<path d="M1 634q0-4 4-4h1048q3 0 3 4v43H1z" fill="#303030"/>
<path d="M1 634q0-4 4-4h1048q3 0 3 4v16H1z" fill="#3a3a3a"/>
<rect x="8" y="632" width="25" height="16" rx="2.500" fill="#2b2b2b"/>
<circle cx="17" cy="640" r="5.500" fill="#e0e0e0"/><path d="M17 640V634.500A5.500 5.500 0 0 1 22.500 640z" fill="#2b2b2b"/><path d="M17 640l4 3.500" stroke="#2b2b2b" stroke-width="1.300"/>
<use href="#chev" x="28" y="640"/>
<rect x="39" y="632" width="111" height="16" rx="2.500" fill="#2b2b2b"/><path d="M98 632v16" stroke="#3a3a3a"/>
<text x="45" y="643.500">Playback</text><use href="#chev" x="92.500" y="640"/>
<text x="105" y="643.500">Keying</text><use href="#chev" x="144.500" y="640"/>
<text x="158" y="643.500">View</text><text x="191.500" y="643.500">Marker</text>
<path d="M450 634q0-2 2-2h13v16h-13q-2 0-2-2z" fill="#555"/><circle cx="457.500" cy="640" r="3.500" fill="#ddd"/>
<path d="M465 632h15q2 0 2 2v12q0 2-2 2h-15z" fill="#333"/><use href="#chev" x="473" y="640" opacity=".3"/>
<rect x="489" y="632" width="102" height="16" rx="3" fill="#555"/>
<path d="M505.500 632v16M522.500 632v16M539.500 632v16M556.500 632v16M573.500 632v16" stroke="#3a3a3a"/>
<g fill="#e0e0e0"><path d="M492 636h1.500v8H492zM499 635.500v9l-5.500-4.500z"/><path d="M513.500 636l3.500 4-3.500 4-3.500-4zM509 636v8l-3-4zM518 636v8l3-4z"/><path d="M535 634.500v11L527 640z"/><path d="M544 634.500v11l8-5.500z"/><path d="M565 636l3.500 4-3.500 4-3.500-4zM559 636v8l2.500-4z"/><path d="M585 636h1.500v8H585zM578 635.500v9l6-4.500z"/></g>
<rect x="816" y="632" width="63" height="16" rx="3" fill="#555"/><text class="c" x="846" y="643.500" style="fill:#d0d0d0">0</text>
<path d="M884 634q0-2 2-2h14v16h-14q-2 0-2-2z" fill="#3f3f3f"/>
<circle cx="892" cy="641" r="5" fill="none" stroke="#ddd"/><path d="M892 641v-3M890 634h4" stroke="#ddd"/>
<rect x="900" y="632" width="149" height="16" rx="2" fill="#555"/><path d="M977 632v16" stroke="#3f3f3f"/>
<text x="914" y="643.500" style="fill:#d0d0d0">Start</text><text class="r" x="964" y="643.500" style="fill:#d0d0d0">1</text>
<text x="990" y="643.500" style="fill:#d0d0d0">End</text><text class="r" x="1037" y="643.500" style="fill:#d0d0d0">250</text>
<path d="M25 667v-12q0-3 3-3h15q3 0 3 3v12z" fill="#4a73c0"/>
<g class="s">
<text class="c" x="35" y="664" style="fill:#ddd;font-size:9.200px">0</text>
<text class="c s" x="74" y="664">10</text><text class="c s" x="113.600" y="664">20</text><text class="c s" x="152.900" y="664">30</text><text class="c s" x="192.200" y="664">40</text><text class="c s" x="231.500" y="664">50</text><text class="c s" x="270.800" y="664">60</text><text class="c s" x="310.100" y="664">70</text><text class="c s" x="349.400" y="664">80</text><text class="c s" x="388.700" y="664">90</text><text class="c s" x="428" y="664">100</text><text class="c s" x="467.300" y="664">110</text><text class="c s" x="506.600" y="664">120</text><text class="c s" x="545.900" y="664">130</text><text class="c s" x="585.200" y="664">140</text><text class="c s" x="624.500" y="664">150</text><text class="c s" x="663.800" y="664">160</text><text class="c s" x="703.100" y="664">170</text><text class="c s" x="742.400" y="664">180</text><text class="c s" x="781.700" y="664">190</text><text class="c s" x="821" y="664">200</text><text class="c s" x="860.300" y="664">210</text><text class="c s" x="899.600" y="664">220</text><text class="c s" x="938.900" y="664">230</text><text class="c s" x="978.200" y="664">240</text><text class="c s" x="1017.500" y="664">250</text>
</g>
<rect x="8" y="667" width="1040" height="7" rx="3.500" fill="#666"/>
<circle cx="11" cy="670.500" r="2.500" fill="#3a3a3a"/><circle cx="1045" cy="670.500" r="2.500" fill="#3a3a3a"/>
<path d="M2 668l2 2.500-2 2.500M1054 668l-2 2.500 2 2.500" fill="none" stroke="#999"/>

<!-- status bar -->
<rect y="677" width="1280" height="17" fill="#2e2e2e"/>
<use href="#mouse" x="15" y="685"/><path d="M11.500 682h3.500v-3h-1q-2 0-2.500 3z" fill="#ccc"/>
<text x="29" y="688.500" class="m">Select</text>
<use href="#mouse" x="71" y="685"/><path d="M67.500 682h3.500v-3h-1q-2 0-2.500 3z" fill="#ccc"/><path d="M77 679v4" stroke="#aaa"/>
<text x="85" y="688.500" class="m">Move</text>
<use href="#mouse" x="223" y="685"/><rect x="221.800" y="679.500" width="2.400" height="4" fill="#ccc"/>
<text x="237" y="688.500" class="m">Rotate View</text>
<use href="#mouse" x="432" y="685"/><path d="M432 682h3.500q-.5-3-2.500-3h-1z" fill="#ccc"/>
<text x="446" y="688.500" class="m">Object Context Menu</text>

<!-- taskbar -->
<rect y="693.500" width="1280" height="26.500" fill="#0f1116"/>
<rect x="327" y="693.500" width="32" height="26.500" fill="#3b3e44"/>
<rect x="359" y="693.500" width="32" height="26.500" fill="#a8611f"/>
<rect x="100" y="718" width="27" height="2" fill="#8cb4dc"/>
<rect x="327" y="718" width="32" height="2" fill="#8cb4dc"/>
<rect x="359" y="718" width="32" height="2" fill="#f08020"/>
<path d="M11 701.500l4-.6v4.800h-4zM16 700.700l6-.9v5.900h-6zM11 706.500h4v4.700l-4-.6zM16 706.500h6v5.900l-6-.9z" fill="#f0f0f0"/>
<circle cx="48.500" cy="705" r="3.800" fill="none" stroke="#e8e8e8" stroke-width="1.100"/><path d="M46 708l-4 4" stroke="#e8e8e8" stroke-width="1.200"/>
<path d="M75 701h7v9h-7zM84.500 701h2M84.500 705h2v1h-2zM84.500 709h2M75 712h11" fill="none" stroke="#dcdcdc" stroke-width="1"/>
<ellipse cx="113.500" cy="706.500" rx="6" ry="7.500" fill="none" stroke="#e0162b" stroke-width="3.200"/>
<path d="M139 700h5l2 2h8v10h-15z" fill="#f0d070"/><rect x="141" y="705" width="11" height="7" fill="#5aa0d8"/>
<path d="M174 701q3 0 5.500-1.500 2.500 1.500 5.500 1.500v5q0 5-5.500 7-5.500-2-5.500-7z" fill="#eee"/><path d="M179.500 700v13M174 706h11" stroke="#111" stroke-width="1"/>
<rect x="206" y="698" width="12" height="16" fill="#6ea0b8"/><rect x="207.500" y="700" width="9" height="3.500" fill="#bfe0ee"/><g fill="#d8e8ee"><rect x="207.500" y="705" width="2.500" height="2"/><rect x="211" y="705" width="2.500" height="2"/><rect x="214" y="705" width="2.500" height="2"/><rect x="207.500" y="708.500" width="2.500" height="2"/><rect x="211" y="708.500" width="2.500" height="2"/><rect x="214" y="708.500" width="2.500" height="2"/></g>
<g><circle cx="245" cy="706.500" r="7.500" fill="#dd4a3d"/><path d="M245 706.500L238.500 702.800A7.500 7.500 0 0 0 241 713z" fill="#3aa757"/><path d="M245 706.500L252.500 706.500A7.500 7.500 0 0 1 241.300 713z" fill="#f3c331"/><circle cx="245" cy="706.500" r="3.500" fill="#4a8af4" stroke="#eee" stroke-width="1"/><circle cx="250" cy="711.500" r="3" fill="#765"/></g>
<circle cx="277.500" cy="706.500" r="7.500" fill="#dd4a3d"/><path d="M277.500 706.500L271 702.800A7.500 7.500 0 0 0 273.500 713z" fill="#3aa757"/><path d="M277.500 706.500L285 706.500A7.500 7.500 0 0 1 273.800 713z" fill="#f3c331"/><circle cx="277.500" cy="706.500" r="3.500" fill="#4a8af4" stroke="#eee" stroke-width="1"/>
<rect x="302" y="701" width="16" height="11" rx="2.500" fill="#e0131e"/><path d="M308 703.500L313 706.500 308 709.500Z" fill="#fff"/>
<g transform="translate(343,706.500)"><path d="M-3-5.500L5-5.500 6-1 5.500 4.500 1 6.500-3 6-8 1-2.500 0-7-3Z" fill="none" stroke="#e8872f" stroke-width="1.500"/><circle cx="1" r="4.500" fill="#eee"/><circle cx="1" r="2.300" fill="#3b6ea5"/></g>
<rect x="368" y="699.500" width="14" height="14" rx="1" fill="#0b2433" stroke="#59b7e8" stroke-width="1.200"/>
<text x="370.500" y="710" style="font:bold 8px 'Liberation Sans',sans-serif;fill:#6dc4f2">Ps</text>
<!-- tray -->
<path d="M1133.500 709l4-4 4 4" fill="none" stroke="#e0e0e0" stroke-width="1.100"/>
<path d="M1149 701h11v7h-11zM1153 708v4h-3M1157 703v7h2" fill="none" stroke="#e0e0e0" stroke-width="1.100"/>
<path d="M1166 704h2l3-3v11l-3-3h-2zM1173 703q2 3.500 0 7M1175 702q2.500 4.500 0 9" fill="none" stroke="#d0d0d0" stroke-width="1"/>
<text x="1181.500" y="710" style="font:8.500px 'Liberation Sans',sans-serif;fill:#e0e0e0">ENG</text>
<text x="1223.500" y="703.500" style="font:8.500px 'Liberation Sans',sans-serif;fill:#eee;text-anchor:middle">11:18 AM</text>
<text x="1223.500" y="715.500" style="font:8.500px 'Liberation Sans',sans-serif;fill:#eee;text-anchor:middle">8/11/2021</text>
<path d="M1253 699h12v10h-8l-2 2v-2h-2z" fill="#e8e8e8"/><path d="M1255 702h8M1255 704.500h8M1255 707h5" stroke="#333" stroke-width=".8"/>
<circle cx="1263" cy="711" r="4.500" fill="#111" stroke="#ccc" stroke-width=".8"/><text class="c" x="1263" y="714" style="font-size:7.500px;fill:#eee">1</text>

<!-- watermark -->
<path d="M1226.700 640A27 27 0 0 0 1199.700 667H1209.700A17 17 0 0 1 1226.700 650Z" fill="#2b9acd"/>
<path d="M1199.700 667A27 27 0 0 0 1253.700 667H1233.500L1241 670A17 17 0 0 1 1209.700 667Z" fill="#1c7fc2"/>
<circle cx="1226.700" cy="659" r="9.500" fill="#2b9acd"/>
<text x="1243" y="688" style="font-size:10px;fill:#8a8a8a">2.93.1</text>
</svg>
</body></html>
